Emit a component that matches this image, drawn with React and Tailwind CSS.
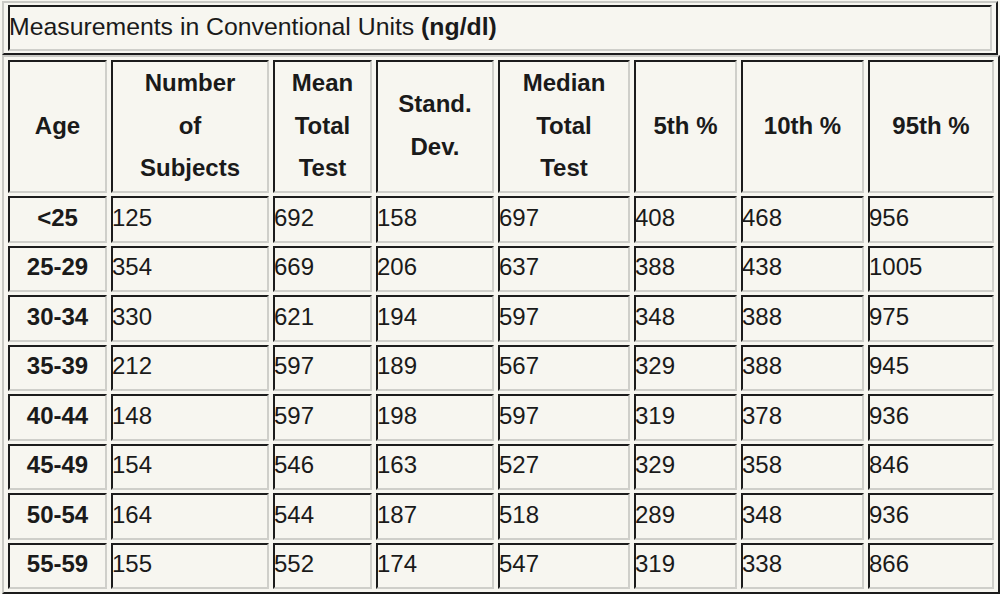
const rows = [
  ["<25", "125", "692", "158", "697", "408", "468", "956"],
  ["25-29", "354", "669", "206", "637", "388", "438", "1005"],
  ["30-34", "330", "621", "194", "597", "348", "388", "975"],
  ["35-39", "212", "597", "189", "567", "329", "388", "945"],
  ["40-44", "148", "597", "198", "597", "319", "378", "936"],
  ["45-49", "154", "546", "163", "527", "329", "358", "846"],
  ["50-54", "164", "544", "187", "518", "289", "348", "936"],
  ["55-59", "155", "552", "174", "547", "319", "338", "866"],
];

const headers = [
  { w: "w-[99px]", lines: ["Age"] },
  { w: "w-[158px]", lines: ["Number", "of", "Subjects"] },
  { w: "w-[99px]", lines: ["Mean", "Total", "Test"] },
  { w: "w-[118px]", lines: ["Stand.", "Dev."] },
  { w: "w-[132px]", lines: ["Median", "Total", "Test"] },
  { w: "w-[103px]", lines: ["5th %"] },
  { w: "w-[123px]", lines: ["10th %"] },
  { w: "w-[126px]", lines: ["95th %"] },
];

const outset = "border-2 border-t-[#c9c9c4] border-l-[#c9c9c4] border-b-[#1c1c1c] border-r-[#1c1c1c]";
const inset = "border-2 border-t-[#1c1c1c] border-l-[#1c1c1c] border-b-[#cfcfca] border-r-[#cfcfca]";

export default function App() {
  return (
    <div className="w-[1000px] h-[594px] overflow-hidden bg-[#f7f6f0] text-[#1a1a1a] text-[24px] font-['Liberation_Sans',Arial,sans-serif] pl-[2px] pt-[1px]">
      <table className={`w-[996px] table-fixed border-separate border-spacing-x-[4px] border-spacing-y-[2px] ${outset}`}>
        <tbody>
          <tr className="h-[46px]">
            <td className={`${inset} p-0 pb-[2px] indent-[-1px] align-middle leading-none text-[24.8px]`}>
              Measurements in Conventional Units <b>(ng/dl)</b>
            </td>
          </tr>
        </tbody>
      </table>
      <table className={`w-[996px] table-fixed border-separate border-spacing-x-[4px] border-spacing-y-[3px] ${outset}`}>
        <thead>
          <tr className="h-[133px]">
            {headers.map((h, i) => (
              <th key={i} className={`${h.w} ${inset} p-0 pb-[1.5px] text-center align-middle font-bold leading-[42.5px]`}>
                {h.lines.map((l, j) => (
                  <div key={j}>{l}</div>
                ))}
              </th>
            ))}
          </tr>
        </thead>
        <tbody>
          {rows.map((r) => (
            <tr key={r[0]} className="h-[46.5px]">
              {r.map((c, i) => (
                <td
                  key={i}
                  className={`${inset} p-0 pb-[3px] align-middle leading-none ${i === 0 ? "text-center font-bold" : "text-left indent-[-1px]"}`}
                >
                  {c}
                </td>
              ))}
            </tr>
          ))}
        </tbody>
      </table>
    </div>
  );
}
